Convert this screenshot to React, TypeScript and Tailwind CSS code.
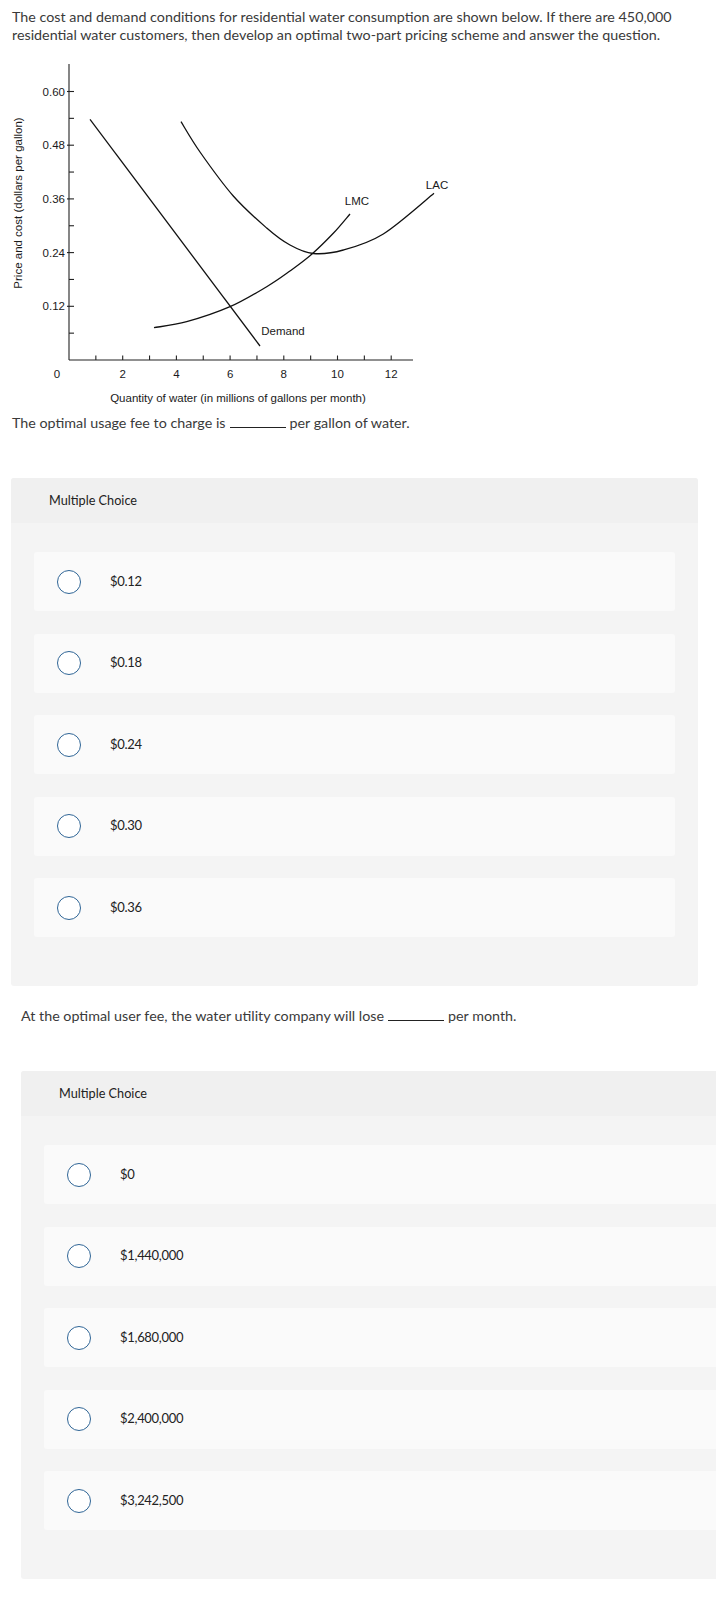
import React from "react";

type P = [number, number];

function smooth(pts: P[]): string {
  let d = `M${pts[0][0]},${pts[0][1]}`;
  for (let i = 0; i < pts.length - 1; i++) {
    const p0 = pts[i - 1] || pts[i];
    const p1 = pts[i];
    const p2 = pts[i + 1];
    const p3 = pts[i + 2] || p2;
    const c1x = p1[0] + (p2[0] - p0[0]) / 6;
    const c1y = p1[1] + (p2[1] - p0[1]) / 6;
    const c2x = p2[0] - (p3[0] - p1[0]) / 6;
    const c2y = p2[1] - (p3[1] - p1[1]) / 6;
    d += ` C${c1x.toFixed(1)},${c1y.toFixed(1)} ${c2x.toFixed(1)},${c2y.toFixed(1)} ${p2[0]},${p2[1]}`;
  }
  return d;
}

const LMC: P[] = [
  [154, 327.7],
  [186.7, 321.7],
  [230, 306.7],
  [266.7, 286.7],
  [290, 271],
  [311.7, 254.3],
  [333.3, 233.3],
  [350, 214],
];

const LAC: P[] = [
  [181, 121.7],
  [200, 152],
  [233.3, 196],
  [266.7, 228],
  [290, 245],
  [313.3, 253.5],
  [343.3, 250],
  [383.3, 234],
  [434, 193.3],
];

function Chart() {
  const ax = 69;
  const ay = 360;
  const unitY = 53.7; // per 0.12
  const unitX = 26.85; // per 1
  const yLabels = ["0.12", "0.24", "0.36", "0.48", "0.60"];
  const font = "'Liberation Sans', Arial, sans-serif";
  return (
    <svg
      width={460}
      height={364}
      viewBox="0 50 460 364"
      className="block"
      style={{ fontFamily: font }}
    >
      <g stroke="#222" strokeWidth={1.1} fill="none">
        <line x1={ax} y1={64} x2={ax} y2={ay} />
        <line x1={ax} y1={ay} x2={413} y2={ay} />
        {[1, 2, 3, 4, 5].map((i) => (
          <line key={"ym" + i} x1={67} y1={ay - i * unitY} x2={74} y2={ay - i * unitY} />
        ))}
        {[0.5, 1.5, 2.5, 3.5, 4.5].map((i) => (
          <line key={"yn" + i} x1={ax} y1={ay - i * unitY} x2={74} y2={ay - i * unitY} />
        ))}
        {Array.from({ length: 12 }, (_, i) => i + 1).map((q) => (
          <line key={"xt" + q} x1={ax + q * unitX} y1={ay - 4.5} x2={ax + q * unitX} y2={ay} />
        ))}
      </g>
      <g stroke="#111" strokeWidth={1.3} fill="none">
        <line x1={90} y1={119.3} x2={260} y2={346} />
        <path d={smooth(LMC)} />
        <path d={smooth(LAC)} />
      </g>
      <g fill="#1a1a1a" fontSize={11.5}>
        {yLabels.map((l, i) => (
          <text key={l} x={65} y={ay - (i + 1) * unitY + 4} textAnchor="end">
            {l}
          </text>
        ))}
        <text x={57} y={377.5} textAnchor="middle">
          0
        </text>
        {[2, 4, 6, 8, 10, 12].map((q) => (
          <text key={"xl" + q} x={ax + q * unitX} y={377.5} textAnchor="middle">
            {q}
          </text>
        ))}
        <text x={437} y={189} textAnchor="middle">
          LAC
        </text>
        <text x={357} y={205} textAnchor="middle">
          LMC
        </text>
        <text x={283} y={335} textAnchor="middle">
          Demand
        </text>
        <text x={238} y={402} textAnchor="middle">
          Quantity of water (in millions of gallons per month)
        </text>
        <text
          x={0}
          y={0}
          textAnchor="middle"
          transform="translate(22 203) rotate(-90)"
        >
          Price and cost (dollars per gallon)
        </text>
      </g>
    </svg>
  );
}

function Radio() {
  return (
    <span className="block h-[24px] w-[24px] shrink-0 rounded-full border-[1.5px] border-[#2f6596] bg-white" />
  );
}

function Option({ label }: { label: string }) {
  return (
    <div className="flex h-[59px] items-center rounded-[3px] bg-[#fafafa] pl-[23px]">
      <Radio />
      <span className="ml-[29px] text-[13px] tracking-[-0.3px] text-[#222]">{label}</span>
    </div>
  );
}

function Panel({ options, className }: { options: string[]; className: string }) {
  return (
    <div className={"overflow-hidden rounded-[3px] bg-[#f4f4f4] " + className}>
      <div className="flex h-[45px] items-center bg-[#f0f0f0] pl-[38px] text-[12.7px] text-[#222]">
        Multiple Choice
      </div>
      <div className="flex flex-col gap-[22.5px] px-[23px] pb-[49px] pt-[29px]">
        {options.map((o) => (
          <Option key={o} label={o} />
        ))}
      </div>
    </div>
  );
}

function Blank() {
  return <span className="mx-[4px] inline-block w-[56px] border-b border-[#222] align-baseline" />;
}

export default function App() {
  return (
    <div
      className="w-[716px] overflow-hidden bg-white text-[#3a3a3a]"
      style={{ fontFamily: "Lato, 'Open Sans', sans-serif" }}
    >
      <p className="pl-[12px] pr-1 pt-[8px] text-[14.3px] leading-[18px]">
        The cost and demand conditions for residential water consumption are shown below. If there are 450,000
        residential water customers, then develop an optimal two-part pricing scheme and answer the question.
      </p>
      <div className="mt-[6px]">
        <Chart />
      </div>
      <p className="pl-[12px] text-[14.3px] leading-[18px]">
        The optimal usage fee to charge is
        <Blank />
        per gallon of water.
      </p>
      <Panel
        className="ml-[11px] mt-[46px] w-[687px]"
        options={["$0.12", "$0.18", "$0.24", "$0.30", "$0.36"]}
      />
      <p className="mt-[21px] pl-[21px] text-[14.3px] leading-[18px]">
        At the optimal user fee, the water utility company will lose
        <Blank />
        per month.
      </p>
      <Panel
        className="ml-[21px] mt-[46px] w-[740px] shrink-0"
        options={["$0", "$1,440,000", "$1,680,000", "$2,400,000", "$3,242,500"]}
      />
      <div className="h-[21px]" />
    </div>
  );
}
